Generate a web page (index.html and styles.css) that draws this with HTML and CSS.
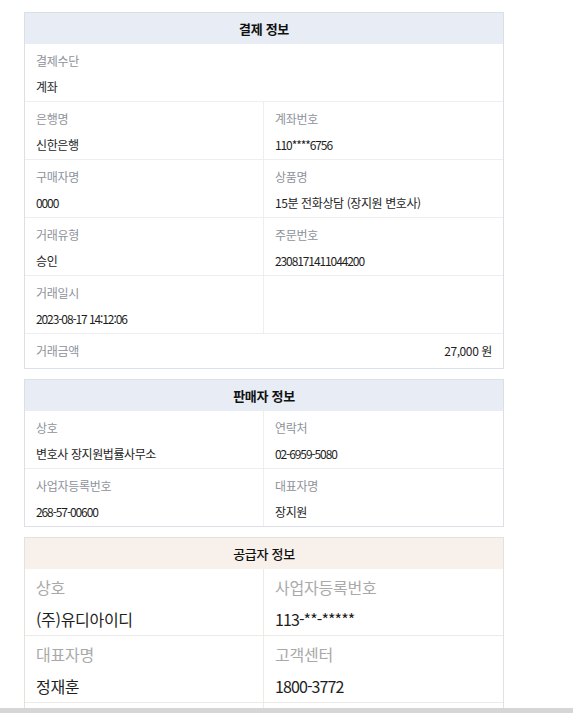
FILE: index.html
```html
<!DOCTYPE html>
<html lang="ko">
<head>
<meta charset="utf-8">
<link rel="stylesheet" href="styles.css">
</head>
<body>
<div class="page">
  <section class="card">
    <div class="card-head">결제 정보</div>
    <div class="row">
      <div class="cell full"><div class="lbl">결제수단</div><div class="val">계좌</div></div>
    </div>
    <div class="row">
      <div class="cell"><div class="lbl">은행명</div><div class="val">신한은행</div></div>
      <div class="cell"><div class="lbl">계좌번호</div><div class="val num">110****6756</div></div>
    </div>
    <div class="row">
      <div class="cell"><div class="lbl">구매자명</div><div class="val num">0000</div></div>
      <div class="cell"><div class="lbl">상품명</div><div class="val">15분 전화상담 (장지원 변호사)</div></div>
    </div>
    <div class="row">
      <div class="cell"><div class="lbl">거래유형</div><div class="val">승인</div></div>
      <div class="cell"><div class="lbl">주문번호</div><div class="val num">2308171411044200</div></div>
    </div>
    <div class="row">
      <div class="cell"><div class="lbl">거래일시</div><div class="val num">2023-08-17 14:12:06</div></div>
      <div class="cell"></div>
    </div>
    <div class="row total">
      <div class="lbl">거래금액</div><div class="val">27,000 원</div>
    </div>
  </section>

  <section class="card">
    <div class="card-head">판매자 정보</div>
    <div class="row">
      <div class="cell"><div class="lbl">상호</div><div class="val">변호사 장지원법률사무소</div></div>
      <div class="cell"><div class="lbl">연락처</div><div class="val num">02-6959-5080</div></div>
    </div>
    <div class="row last">
      <div class="cell"><div class="lbl">사업자등록번호</div><div class="val num">268-57-00600</div></div>
      <div class="cell"><div class="lbl">대표자명</div><div class="val">장지원</div></div>
    </div>
  </section>

  <section class="card supplier">
    <div class="card-head">공급자 정보</div>
    <div class="row">
      <div class="cell"><div class="lbl">상호</div><div class="val">(주)유디아이디</div></div>
      <div class="cell"><div class="lbl">사업자등록번호</div><div class="val num">113-**-*****</div></div>
    </div>
    <div class="row">
      <div class="cell"><div class="lbl">대표자명</div><div class="val">정재훈</div></div>
      <div class="cell"><div class="lbl">고객센터</div><div class="val num">1800-3772</div></div>
    </div>
    <div class="row">
      <div class="cell"><div class="lbl">&nbsp;</div><div class="val">&nbsp;</div></div>
      <div class="cell"><div class="lbl">&nbsp;</div><div class="val">&nbsp;</div></div>
    </div>
  </section>
</div>
<div class="hbar"></div>
</body>
</html>
```

FILE: styles.css
```css
html, body {
  margin: 0;
  padding: 0;
  background: #fff;
  height: 100%;
  overflow: hidden;
}
body {
  font-family: "Noto Sans CJK KR", "Noto Sans", sans-serif;
  color: #222;
}
.page {
  width: 480px;
  padding: 12px 0 0 24px;
  display: flex;
  flex-direction: column;
  gap: 10px;
}
.card {
  border: 1px solid #dcdfe5;
  background: #fff;
}
.card-head {
  height: 31px;
  background: #e8edf5;
  font-size: 13px;
  font-weight: 700;
  color: #111;
  display: flex;
  align-items: center;
  justify-content: center;
  letter-spacing: -0.3px;
}
.row {
  display: grid;
  grid-template-columns: 239px 1fr;
  border-bottom: 1px solid #eceef1;
}
.row.last { border-bottom: none; }
.cell {
  padding: 8px 11px 5px;
  display: flex;
  flex-direction: column;
  gap: 8px;
}
.cell:first-child { border-right: 1px solid #eceef1; }
.cell.full { grid-column: 1 / -1; border-right: none; }
.lbl {
  font-size: 12px;
  line-height: 18px;
  color: #8d929b;
  letter-spacing: -0.3px;
}
.val {
  font-size: 12px;
  line-height: 18px;
  color: #1e1e1e;
  letter-spacing: -0.4px;
  white-space: nowrap;
}
.val.num { letter-spacing: -1.1px; }
.row.total {
  display: flex;
  justify-content: space-between;
  align-items: center;
  padding: 8px 11px 8px;
  border-bottom: none;
}
.supplier { border-color: #e6e1dc; }
.supplier .card-head {
  background: #f8f0ea;
  font-weight: 500;
}
.supplier .row { border-bottom-color: #eeeae6; }
.supplier .cell:first-child { border-right-color: #eeeae6; }
.supplier .cell {
  padding: 7px 11px 5px;
  gap: 10px;
}
.supplier .lbl {
  font-size: 16px;
  line-height: 22px;
  color: #a9a9a9;
  letter-spacing: -0.2px;
}
.supplier .val {
  font-size: 16px;
  line-height: 22px;
  color: #1e1e1e;
  letter-spacing: -0.3px;
}
.supplier .val.num { letter-spacing: -0.9px; }
.hbar {
  position: fixed;
  left: 0;
  right: 0;
  bottom: 0;
  height: 5px;
  background: #d6d6d6;
}
```
